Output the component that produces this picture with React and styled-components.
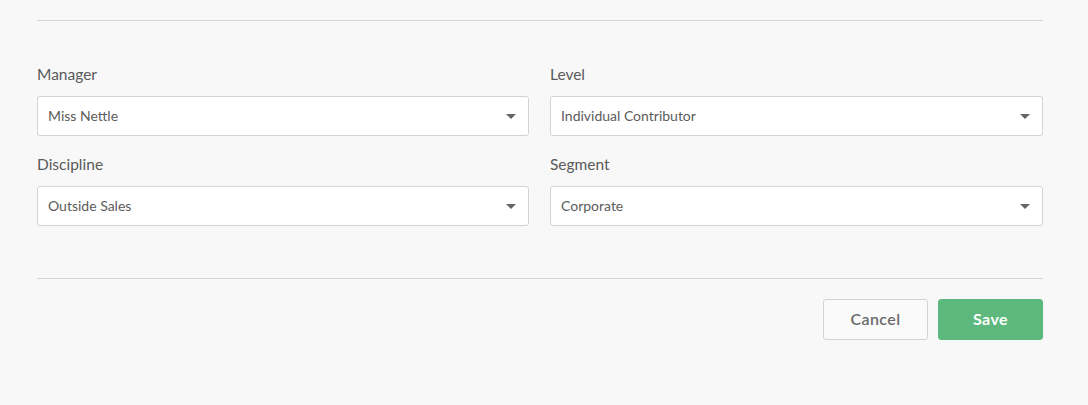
import React from "react";
import styled, { createGlobalStyle } from "styled-components";

const Global = createGlobalStyle`
  html, body { margin: 0; padding: 0; background: #f8f8f8; }
  body { font-family: Lato, "Helvetica Neue", Arial, sans-serif; }
  * { box-sizing: border-box; }
`;

const Page = styled.div`
  width: 1088px;
  height: 405px;
  padding: 20px 45px 0 37px;
  background: #f8f8f8;
`;

const Divider = styled.hr`
  margin: 0;
  border: 0;
  border-top: 1px solid #d6d6d6;
  height: 0;
`;

const Grid = styled.div`
  display: grid;
  grid-template-columns: 492px 493px;
  column-gap: 21px;
  row-gap: 18px;
  padding: 43px 0 52px;
`;

const Field = styled.div`
  display: flex;
  flex-direction: column;
  gap: 12px;
`;

const Label = styled.label`
  font-size: 15.5px;
  color: #5a5a5a;
  line-height: 20px;
`;

const SelectBox = styled.div`
  height: 40px;
  background: #fff;
  border: 1px solid #d3d3d3;
  border-radius: 3px;
  display: flex;
  align-items: center;
  justify-content: space-between;
  padding: 0 12px 2px 10px;
  font-size: 14px;
  color: #5c5c5c;
`;

const Caret = styled.span`
  width: 0;
  height: 0;
  border-left: 5px solid transparent;
  border-right: 5px solid transparent;
  border-top: 5px solid #666;
  margin-top: 3px;
`;

const Actions = styled.div`
  display: flex;
  justify-content: flex-end;
  gap: 10px;
  padding-top: 20px;
`;

const Button = styled.button`
  width: 105px;
  height: 41px;
  padding: 0 0 3px;
  border-radius: 3px;
  font-family: inherit;
  font-size: 16px;
  letter-spacing: 0.4px;
  font-weight: ${(p) => (p.$primary ? 700 : 600)};
  cursor: pointer;
  background: ${(p) => (p.$primary ? "#5cb87c" : "#fafafa")};
  color: ${(p) => (p.$primary ? "#fff" : "#6a6a6a")};
  border: 1px solid ${(p) => (p.$primary ? "#5cb87c" : "#d3d3d3")};
`;

const fields = [
  { label: "Manager", value: "Miss Nettle" },
  { label: "Level", value: "Individual Contributor" },
  { label: "Discipline", value: "Outside Sales" },
  { label: "Segment", value: "Corporate" },
];

export default function App() {
  return (
    <>
      <Global />
      <Page>
        <Divider />
        <Grid>
          {fields.map((f) => (
            <Field key={f.label}>
              <Label>{f.label}</Label>
              <SelectBox>
                <span>{f.value}</span>
                <Caret />
              </SelectBox>
            </Field>
          ))}
        </Grid>
        <Divider />
        <Actions>
          <Button>Cancel</Button>
          <Button $primary>Save</Button>
        </Actions>
      </Page>
    </>
  );
}
